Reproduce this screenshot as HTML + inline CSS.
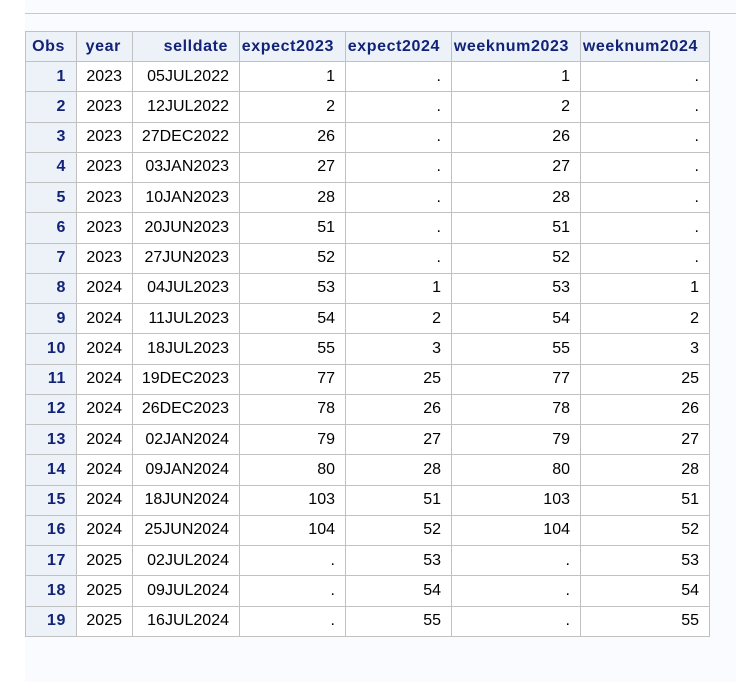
<!DOCTYPE html>
<html><head><style>
html,body{margin:0;padding:0;background:#fff;width:736px;height:682px;overflow:hidden}
.bg{position:absolute;left:25px;top:0;width:711px;height:682px;background:#fafbfe}
.line{position:absolute;left:25px;top:13px;width:711px;height:1px;background:#c8c8cc}
table{position:absolute;left:25px;top:31px;border-collapse:collapse;table-layout:fixed;font-family:"Liberation Sans",Arial,sans-serif;font-size:16px;background:#fff}
td,th{border:1px solid #c1c1c1;padding:0 10px 0 0;text-align:right;height:29.26px;color:#000;white-space:nowrap;overflow:hidden}
th{background:#edf2f9;color:#112277;font-weight:bold;height:29px;letter-spacing:0.6px;padding-right:11px}
td.o{background:#edf2f9;color:#112277;font-weight:bold;letter-spacing:0.6px}
</style></head><body>
<div class="bg"></div><div class="line"></div>
<table>
<colgroup><col style="width:51px"><col style="width:56px"><col style="width:107px"><col style="width:106px"><col style="width:106px"><col style="width:129px"><col style="width:129px"></colgroup>
<tr><th>Obs</th><th>year</th><th>selldate</th><th>expect2023</th><th>expect2024</th><th>weeknum2023</th><th>weeknum2024</th></tr>
<tr><td class="o">1</td><td>2023</td><td>05JUL2022</td><td>1</td><td>.</td><td>1</td><td>.</td></tr>
<tr><td class="o">2</td><td>2023</td><td>12JUL2022</td><td>2</td><td>.</td><td>2</td><td>.</td></tr>
<tr><td class="o">3</td><td>2023</td><td>27DEC2022</td><td>26</td><td>.</td><td>26</td><td>.</td></tr>
<tr><td class="o">4</td><td>2023</td><td>03JAN2023</td><td>27</td><td>.</td><td>27</td><td>.</td></tr>
<tr><td class="o">5</td><td>2023</td><td>10JAN2023</td><td>28</td><td>.</td><td>28</td><td>.</td></tr>
<tr><td class="o">6</td><td>2023</td><td>20JUN2023</td><td>51</td><td>.</td><td>51</td><td>.</td></tr>
<tr><td class="o">7</td><td>2023</td><td>27JUN2023</td><td>52</td><td>.</td><td>52</td><td>.</td></tr>
<tr><td class="o">8</td><td>2024</td><td>04JUL2023</td><td>53</td><td>1</td><td>53</td><td>1</td></tr>
<tr><td class="o">9</td><td>2024</td><td>11JUL2023</td><td>54</td><td>2</td><td>54</td><td>2</td></tr>
<tr><td class="o">10</td><td>2024</td><td>18JUL2023</td><td>55</td><td>3</td><td>55</td><td>3</td></tr>
<tr><td class="o">11</td><td>2024</td><td>19DEC2023</td><td>77</td><td>25</td><td>77</td><td>25</td></tr>
<tr><td class="o">12</td><td>2024</td><td>26DEC2023</td><td>78</td><td>26</td><td>78</td><td>26</td></tr>
<tr><td class="o">13</td><td>2024</td><td>02JAN2024</td><td>79</td><td>27</td><td>79</td><td>27</td></tr>
<tr><td class="o">14</td><td>2024</td><td>09JAN2024</td><td>80</td><td>28</td><td>80</td><td>28</td></tr>
<tr><td class="o">15</td><td>2024</td><td>18JUN2024</td><td>103</td><td>51</td><td>103</td><td>51</td></tr>
<tr><td class="o">16</td><td>2024</td><td>25JUN2024</td><td>104</td><td>52</td><td>104</td><td>52</td></tr>
<tr><td class="o">17</td><td>2025</td><td>02JUL2024</td><td>.</td><td>53</td><td>.</td><td>53</td></tr>
<tr><td class="o">18</td><td>2025</td><td>09JUL2024</td><td>.</td><td>54</td><td>.</td><td>54</td></tr>
<tr><td class="o">19</td><td>2025</td><td>16JUL2024</td><td>.</td><td>55</td><td>.</td><td>55</td></tr>
</table>
</body></html>
